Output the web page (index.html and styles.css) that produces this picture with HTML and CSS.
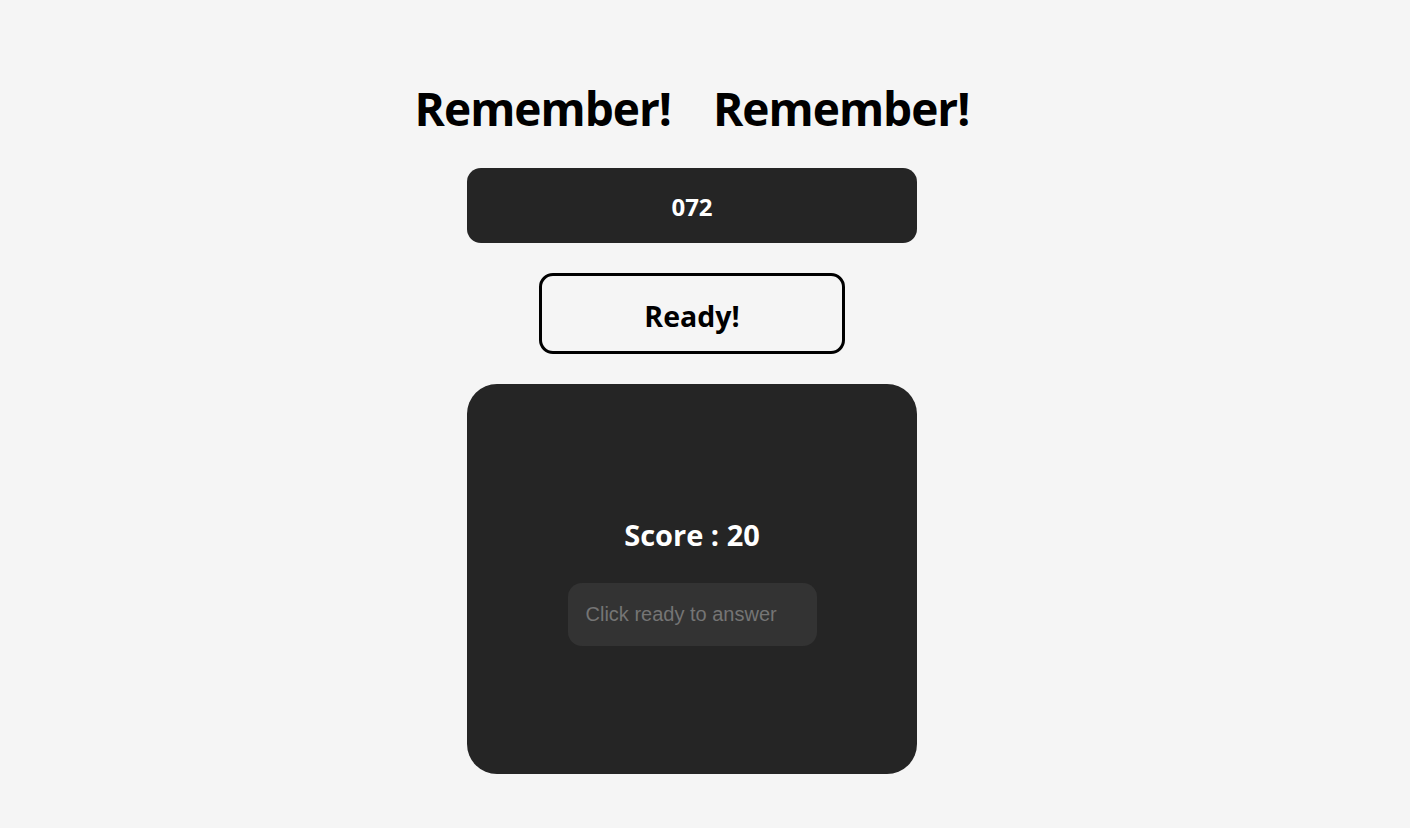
FILE: index.html
```html
<!DOCTYPE html>
<html>
<head>
<meta charset="utf-8">
<link rel="stylesheet" href="styles.css">
</head>
<body>
<main class="app">
  <h1 class="title"><span>Remember!</span><span>Remember!</span></h1>
  <div class="number">072</div>
  <button class="ready">Ready!</button>
  <section class="card">
    <div class="score">Score : 20</div>
    <input class="answer" type="text" placeholder="Click ready to answer" disabled>
  </section>
</main>
</body>
</html>
```
FILE: styles.css
```css
html, body {
  margin: 0;
  padding: 0;
  background: #f5f5f5;
}
body {
  font-family: "Open Sans", "Noto Sans", sans-serif;
}
.app {
  display: flex;
  flex-direction: column;
  align-items: center;
  padding: 76px 26px 0 0;
}
.title {
  margin: 0;
  display: flex;
  gap: 42px;
  font-size: 46px;
  font-weight: 700;
  line-height: 64px;
  color: #000;
  letter-spacing: -1px;
}
.number {
  margin-top: 28px;
  width: 450px;
  height: 75px;
  background: #252525;
  border-radius: 14px;
  color: #fff;
  font-size: 24px;
  font-weight: 700;
  display: flex;
  align-items: center;
  justify-content: center;
  padding-top: 2px;
  box-sizing: border-box;
}
.ready {
  margin-top: 30px;
  width: 306px;
  height: 81px;
  border: 3px solid #000;
  border-radius: 14px;
  background: #f5f5f5;
  font-family: inherit;
  font-size: 28.5px;
  font-weight: 700;
  color: #000;
  padding: 4px 0 0;
}
.card {
  margin-top: 30px;
  width: 450px;
  height: 390px;
  background: #252525;
  border-radius: 30px;
  display: flex;
  flex-direction: column;
  align-items: center;
  justify-content: center;
  padding-top: 4px;
  box-sizing: border-box;
}
.score {
  color: #fff;
  font-size: 29px;
  font-weight: 700;
  line-height: 36px;
}
.answer {
  margin-top: 30px;
  width: 249px;
  height: 63px;
  box-sizing: border-box;
  background: #333;
  border: none;
  border-radius: 14px;
  padding: 0 18px;
  font-family: "Liberation Sans", Arial, sans-serif;
  font-size: 20px;
  color: #777;
  outline: none;
}
.answer::placeholder {
  color: #757575;
}
```
